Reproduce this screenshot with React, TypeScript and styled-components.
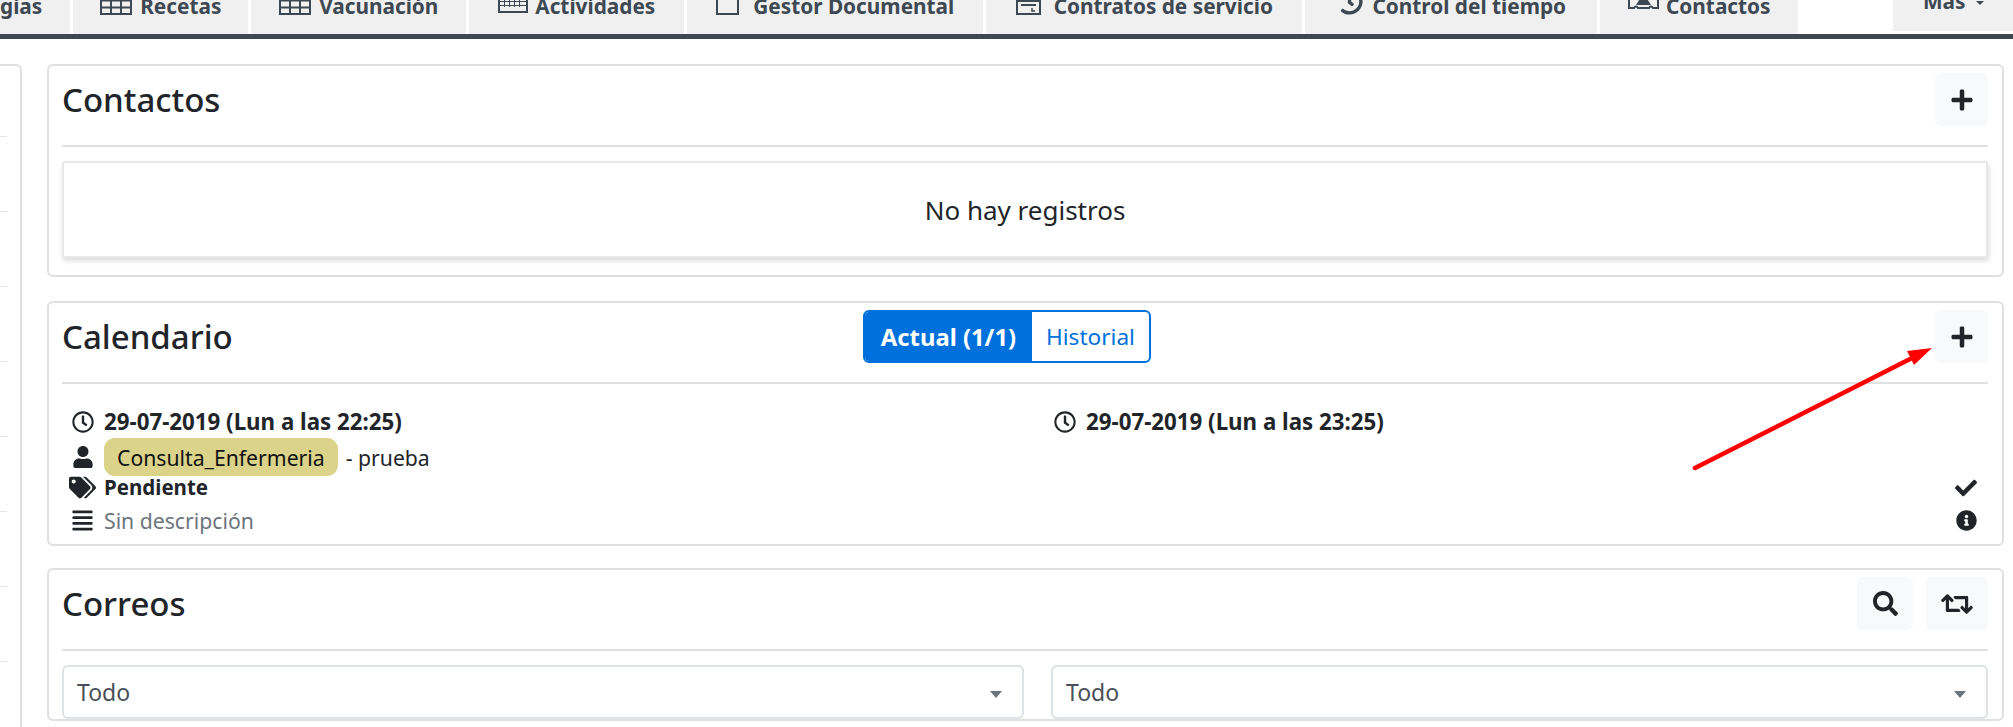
import styled, { createGlobalStyle } from "styled-components";
import { ReactNode } from "react";
import {
  FaPlus,
  FaSearch,
  FaRetweet,
  FaCheck,
  FaInfoCircle,
  FaUser,
  FaTags,
  FaAlignJustify,
  FaRegClock,
  FaHistory,
} from "react-icons/fa";

const GlobalStyle = createGlobalStyle`
  html, body {
    margin: 0;
    padding: 0;
    background: #fff;
  }
  * {
    box-sizing: border-box;
  }
`;

const Page = styled.div`
  position: relative;
  width: 2013px;
  height: 727px;
  overflow: hidden;
  font-family: "Noto Sans", "Open Sans", sans-serif;
  color: #212529;
`;

const TabStrip = styled.div`
  display: flex;
  gap: 3px;
  height: 34px;
  align-items: flex-start;
  overflow: hidden;
`;

const Tab = styled.div<{ $w: number; $gap?: number }>`
  flex: 0 0 ${(p) => p.$w}px;
  height: 40px;
  background: #f0f0f0;
  color: #3e4852;
  display: flex;
  justify-content: center;
  align-items: flex-start;
  gap: ${(p) => p.$gap ?? 8}px;
  font-size: 20.8px;
  font-weight: 700;
  line-height: 20px;
  margin-top: -4px;
  white-space: nowrap;

  &:first-child {
    justify-content: flex-end;
    padding-right: 28px;
  }
`;

const TabGap = styled.div`
  flex: 0 0 89px;
`;

const MoreTab = styled(Tab)`
  height: 40px;
  margin-top: -9px;
  gap: 10px;
`;

const Caret = styled.span`
  width: 0;
  height: 0;
  margin-top: 10px;
  border-left: 4px solid transparent;
  border-right: 4px solid transparent;
  border-top: 4px solid #3e4852;
`;

const TabIcon = styled.svg`
  flex: none;
  margin-top: 1px;
`;

const HistoryIcon = styled(FaHistory)`
  flex: none;
  margin-top: -8px;
`;

const Bar = styled.div`
  height: 5px;
  background: #3e4852;
`;

const Main = styled.div`
  display: grid;
  grid-template-columns: 22px 1fr;
  gap: 25px;
  padding: 25px 9px 0 0;
`;

const SideStub = styled.aside`
  height: 700px;
  border: 2px solid #e0e0e0;
  border-left: 0;
  border-bottom: 0;
  border-top-right-radius: 6px;
`;

const StubRow = styled.div`
  width: 7px;
  height: 75px;
  border-bottom: 1px solid #e6e6e6;
  &:first-child {
    height: 71px;
  }
`;

const Column = styled.div`
  display: flex;
  flex-direction: column;
`;

const Panel = styled.section<{ $mb?: number }>`
  border: 2px solid #e0e0e0;
  border-radius: 6px;
  padding: 7px 14px 0 13px;
  margin-bottom: ${(p) => p.$mb ?? 0}px;
`;

const PanelHead = styled.header`
  display: grid;
  grid-template-columns: 801px 288px 1fr;
  align-items: center;
  height: 74px;
  padding-bottom: 19px;
  border-bottom: 2px solid #e0e0e0;
`;

const Title = styled.h3`
  margin: 0;
  font-size: 33px;
  font-weight: 500;
  line-height: 40px;
  color: #212529;
`;

const Actions = styled.div`
  grid-column: 3;
  display: flex;
  justify-content: flex-end;
  gap: 13px;
`;

const IconButton = styled.button<{ $w: number }>`
  width: ${(p) => p.$w}px;
  height: 53px;
  border: 0;
  border-radius: 6px;
  background: #f8f9fa;
  color: #212529;
  display: flex;
  align-items: center;
  justify-content: center;
  padding: 0;
`;

const Toggle = styled.div`
  display: flex;
  width: 288px;
  height: 53px;
  border: 2px solid #0071dc;
  border-radius: 6px;
  overflow: hidden;
  font-size: 22.6px;
`;

const ToggleOn = styled.div`
  flex: 0 0 167px;
  background: #0071dc;
  color: #fff;
  font-size: 23.8px;
  font-weight: 700;
  display: flex;
  align-items: center;
  justify-content: center;
`;

const ToggleOff = styled.div`
  flex: 1;
  color: #0071dc;
  display: flex;
  align-items: center;
  justify-content: center;
`;

const EmptyBox = styled.div`
  height: 97px;
  margin: 14px 0 17px;
  border: 2px solid #e8e8e8;
  border-radius: 2px;
  box-shadow: 1px 3px 5px rgba(0, 0, 0, 0.14);
  display: flex;
  align-items: center;
  justify-content: center;
  font-size: 26px;
  color: #212529;
`;

const EventList = styled.div`
  padding: 21px 0 7px;
`;

const EventRow = styled.div`
  display: grid;
  grid-template-columns: 982px 1fr 44px;
  height: 33px;
  align-items: center;
`;

const EventCell = styled.div`
  display: flex;
  align-items: center;
  font-size: 21.2px;
  line-height: 33px;
  white-space: nowrap;
`;

const EventIcon = styled.span`
  flex: 0 0 42px;
  display: flex;
  justify-content: center;
  padding-right: 1px;
`;

const Strong = styled.b<{ $size: number }>`
  font-size: ${(p) => p.$size}px;
  font-weight: 700;
`;

const Badge = styled.span`
  height: 38px;
  display: flex;
  align-items: center;
  padding: 0 13px;
  background: #dbd38a;
  color: #111;
  border-radius: 11px;
  margin-right: 8px;
`;

const Muted = styled.span`
  color: #6c757d;
`;

const RightIcon = styled.div`
  display: flex;
  justify-content: center;
`;

const Filters = styled.div`
  display: grid;
  grid-template-columns: 962px 1fr;
  gap: 27px;
  margin-top: 14px;
`;

const SelectBox = styled.div`
  height: 54px;
  border: 2px solid #dee2e6;
  border-radius: 6px;
  padding: 0 20px 0 13px;
  display: flex;
  align-items: center;
  justify-content: space-between;
  font-size: 23px;
  color: #495057;

  &::after {
    content: "";
    border-left: 6px solid transparent;
    border-right: 6px solid transparent;
    border-top: 7px solid #6c757d;
    margin-top: 4px;
  }
`;

const Annotation = styled.svg`
  position: absolute;
  left: 1680px;
  top: 335px;
`;

const GridIcon = () => (
  <TabIcon width="32" height="18" viewBox="0 0 32 18" fill="none" stroke="#3e4852" strokeWidth="2">
    <path d="M1 0v17h30V0M1 3.5h30M1 10.5h30M11 3v14M21 3v14" />
  </TabIcon>
);

const CalendarIcon = () => (
  <TabIcon width="30" height="16" viewBox="0 0 30 16" fill="none" stroke="#3e4852">
    <path strokeWidth="2" d="M1 0v15h28V0" />
    <path strokeWidth="1" d="M1 8.5h28M1 4.5h28M6.5 3v7M11.5 3v7M16.5 3v7M21.5 3v7" />
  </TabIcon>
);

const FileIcon = () => (
  <TabIcon width="23" height="18" viewBox="0 0 23 18" fill="none" stroke="#3e4852" strokeWidth="2">
    <path d="M1 0v17h21V0" />
  </TabIcon>
);

const ContractIcon = () => (
  <TabIcon width="25" height="18" viewBox="0 0 25 18" fill="none" stroke="#3e4852">
    <path strokeWidth="2" d="M1 0v17h23V0" />
    <path strokeWidth="2" d="M1 4h23M5 8h15" />
    <path strokeWidth="1.5" d="M16 11v3h3" />
  </TabIcon>
);

const CardIcon = () => (
  <TabIcon width="31" height="13" viewBox="0 0 31 13" fill="none" stroke="#3e4852">
    <path strokeWidth="2" d="M1 0v11h5c1-2 3-2 4 0h11c1-2 3-2 4 0h5V0" />
    <path fill="#3e4852" stroke="none" d="M8 8l5-8h5l5 8z" />
  </TabIcon>
);

const tabs: { w: number; label: string; gap?: number; icon?: ReactNode }[] = [
  { w: 70, label: "gias" },
  { w: 175, label: "Recetas", icon: <GridIcon /> },
  { w: 215, label: "Vacunación", icon: <GridIcon /> },
  { w: 215, label: "Actividades", gap: 7, icon: <CalendarIcon /> },
  { w: 296, label: "Gestor Documental", gap: 14, icon: <FileIcon /> },
  { w: 316, label: "Contratos de servicio", gap: 13, icon: <ContractIcon /> },
  { w: 292, label: "Control del tiempo", gap: 9, icon: <HistoryIcon size={27} /> },
  { w: 198, label: "Contactos", gap: 7, icon: <CardIcon /> },
];

export default function App() {
  return (
    <Page>
      <GlobalStyle />
      <TabStrip>
        {tabs.map((t) => (
          <Tab key={t.label} $w={t.w} $gap={t.gap}>
            {t.icon}
            {t.label}
          </Tab>
        ))}
        <TabGap />
        <MoreTab $w={120}>
          Mas
          <Caret />
        </MoreTab>
      </TabStrip>
      <Bar />
      <Main>
        <SideStub>
          {Array.from({ length: 9 }).map((_, i) => (
            <StubRow key={i} />
          ))}
        </SideStub>
        <Column>
          <Panel $mb={24}>
            <PanelHead>
              <Title>Contactos</Title>
              <Actions>
                <IconButton $w={53}>
                  <FaPlus size={24} />
                </IconButton>
              </Actions>
            </PanelHead>
            <EmptyBox>No hay registros</EmptyBox>
          </Panel>

          <Panel $mb={22}>
            <PanelHead>
              <Title>Calendario</Title>
              <Toggle>
                <ToggleOn>Actual (1/1)</ToggleOn>
                <ToggleOff>Historial</ToggleOff>
              </Toggle>
              <Actions>
                <IconButton $w={53}>
                  <FaPlus size={24} />
                </IconButton>
              </Actions>
            </PanelHead>
            <EventList>
              <EventRow>
                <EventCell>
                  <EventIcon>
                    <FaRegClock size={22} />
                  </EventIcon>
                  <Strong $size={22.3}>29-07-2019 (Lun a las 22:25)</Strong>
                </EventCell>
                <EventCell>
                  <EventIcon>
                    <FaRegClock size={22} />
                  </EventIcon>
                  <Strong $size={22.3}>29-07-2019 (Lun a las 23:25)</Strong>
                </EventCell>
              </EventRow>
              <EventRow>
                <EventCell>
                  <EventIcon>
                    <FaUser size={22} />
                  </EventIcon>
                  <Badge>Consulta_Enfermeria</Badge>- prueba
                </EventCell>
              </EventRow>
              <EventRow>
                <EventCell>
                  <EventIcon>
                    <FaTags size={27} />
                  </EventIcon>
                  <Strong $size={20.5}>Pendiente</Strong>
                </EventCell>
                <span />
                <RightIcon>
                  <FaCheck size={22} />
                </RightIcon>
              </EventRow>
              <EventRow>
                <EventCell>
                  <EventIcon>
                    <FaAlignJustify size={23} />
                  </EventIcon>
                  <Muted>Sin descripción</Muted>
                </EventCell>
                <span />
                <RightIcon>
                  <FaInfoCircle size={21} />
                </RightIcon>
              </EventRow>
            </EventList>
          </Panel>

          <Panel>
            <PanelHead>
              <Title>Correos</Title>
              <Actions>
                <IconButton $w={56}>
                  <FaSearch size={25} />
                </IconButton>
                <IconButton $w={62}>
                  <FaRetweet size={32} />
                </IconButton>
              </Actions>
            </PanelHead>
            <Filters>
              <SelectBox>Todo</SelectBox>
              <SelectBox>Todo</SelectBox>
            </Filters>
          </Panel>
        </Column>
      </Main>
      <Annotation width="260" height="140" viewBox="0 0 260 140">
        <path d="M15 133L236 21" stroke="#ff0000" strokeWidth="4.5" strokeLinecap="round" fill="none" />
        <path d="M252 13L227 16L234 30z" fill="#ff0000" />
      </Annotation>
    </Page>
  );
}
